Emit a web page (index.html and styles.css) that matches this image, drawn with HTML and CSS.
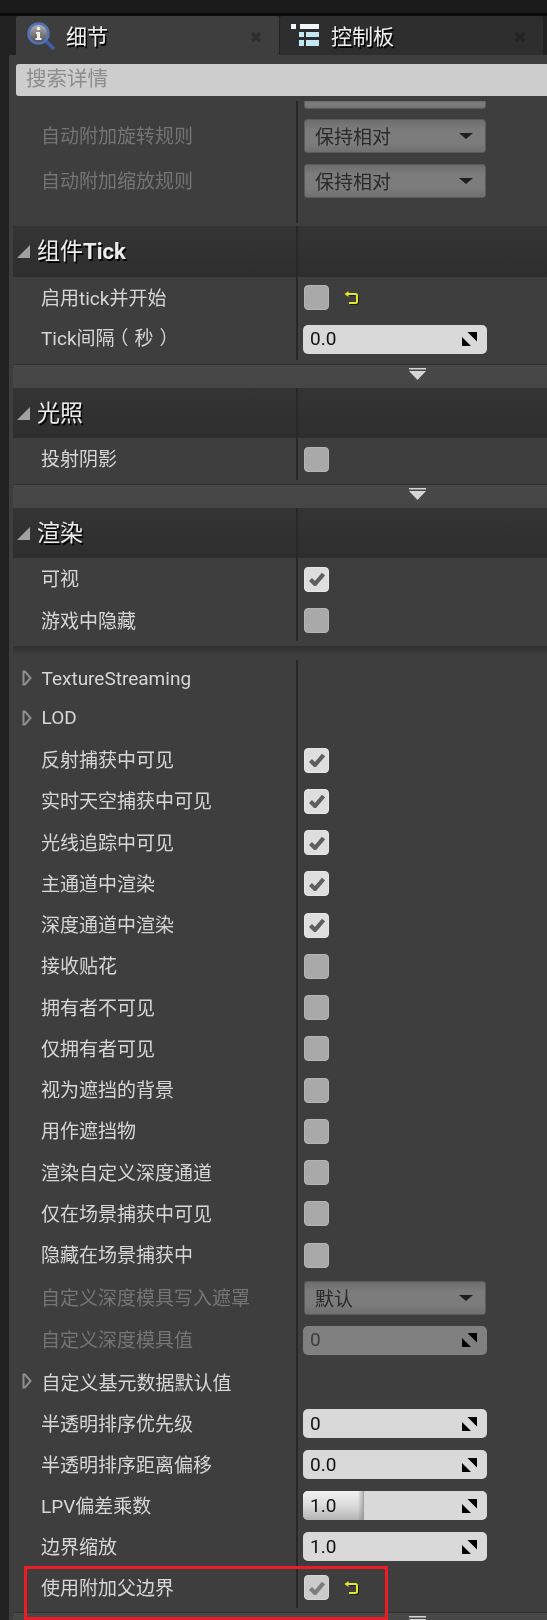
FILE: index.html
```html
<!DOCTYPE html>
<html lang="zh">
<head>
<meta charset="utf-8">
<title>细节</title>
<link rel="stylesheet" href="styles.css">
</head>
<body>
<svg class="defs" width="0" height="0" aria-hidden="true">
  <defs>
    <symbol id="spin" viewBox="0 0 15 14"><path d="M5.5 0H15V9.5ZM0 5 9 14H0Z" fill="#000"/></symbol>
    <symbol id="undo" viewBox="0 0 15 15">
      <path d="M3 4H11.500Q13 4 13 5.500V11.500Q13 13 11.500 13H5" transform="translate(1 1)" fill="none" stroke="#1a1a1a" stroke-width="2"/>
      <path d="M3 4H11.500Q13 4 13 5.500V11.500Q13 13 11.500 13H5" fill="none" stroke="#e6e62e" stroke-width="2"/>
      <path d="M0.500 4 4.500 1V7Z" fill="#e6e62e"/>
    </symbol>
    <symbol id="check" viewBox="0 0 16 14"><path d="M1.500 7.500 6 12 14.500 2" fill="none" stroke="currentColor" stroke-width="4.200"/></symbol>
    <symbol id="down" viewBox="0 0 17 12"><path d="M0 0H17V1.500H0Z" fill="#d4d4d4"/><path d="M0 3H17L8.500 12Z" fill="#d4d4d4"/></symbol>
    <symbol id="tri" viewBox="0 0 13 13"><path d="M13 0V13H0Z" fill="#a0a0a0"/></symbol>
    <symbol id="tree" viewBox="0 0 10 16"><path d="M1.500 1.500H3L8.500 8 3 14.500H1.500Z" fill="none" stroke="#8e8e8e" stroke-width="2"/></symbol>
    <symbol id="close" viewBox="0 0 12 12"><path d="M2 2 10 10M10 2 2 10" stroke="currentColor" stroke-width="3.500"/></symbol>
  </defs>
</svg>
<div class="app">
  <div class="topbar"></div>
  <div class="tabs">
    <div class="tab tab-on">
      <svg class="tab-icon" width="28" height="28" viewBox="0 0 28 28">
        <defs><linearGradient id="lens" x1="0" y1="0" x2="0" y2="1"><stop offset="0" stop-color="#b5b5b5"/><stop offset="1" stop-color="#4b4b4b"/></linearGradient></defs>
        <path d="M18 18 26 26" stroke="#3f5fa8" stroke-width="3.500" stroke-linecap="round"/>
        <circle cx="11.500" cy="11.500" r="10" fill="url(#lens)" stroke="#5271b8" stroke-width="2.500"/>
        <circle cx="11.500" cy="6.500" r="1.800" fill="#eee"/>
        <path d="M9 10H13V16H14.500V18H8.500V16H10V12H9Z" fill="#eee"/>
      </svg>
      <span class="tab-text">细节</span>
      <svg class="tab-close" width="12" height="12"><use href="#close"/></svg>
    </div>
    <div class="tab tab-off">
      <svg class="tab-icon" width="28" height="23" viewBox="0 0 28 23">
        <path d="M0 0H5V5H0ZM9 0H28V5H9Z" fill="#f0f8fb"/>
        <path d="M8 8H13V13H8ZM15 8H28V13H15ZM8 16H13V22H8ZM15 16H28V22H15Z" fill="#c3e7f5"/>
      </svg>
      <span class="tab-text">控制板</span>
      <svg class="tab-close" width="12" height="12"><use href="#close"/></svg>
    </div>
  </div>
  <div class="panel">
    <div class="search">搜索详情</div>

    <div class="group-top">
      <div class="row h-partial"><div class="name"></div><div class="val val-top"><div class="drop drop-cut"></div></div></div>
      <div class="row h-45"><div class="name dim">自动附加旋转规则</div><div class="val"><div class="drop"><span>保持相对</span><i class="caret"></i></div></div></div>
      <div class="row h-45"><div class="name dim">自动附加缩放规则</div><div class="val"><div class="drop"><span>保持相对</span><i class="caret"></i></div></div></div>
      <div class="row h-tail"><div class="name"></div><div class="val"></div></div>
    </div>

    <div class="head head-tick"><div class="head-name"><svg class="tri" width="13" height="13"><use href="#tri"/></svg><span>组件<b>Tick</b></span></div><div class="head-val"></div></div>
    <div class="row h-41"><div class="name">启用tick并开始</div><div class="val"><div class="box"></div><svg class="undo" width="15" height="15"><use href="#undo"/></svg></div></div>
    <div class="row h-42 pad-b"><div class="name">Tick间隔<span class="parens">（秒）</span></div><div class="val"><div class="field"><span>0.0</span><svg class="spin" width="15" height="14"><use href="#spin"/></svg></div></div></div>
    <div class="expander"><svg width="17" height="12"><use href="#down"/></svg></div>

    <div class="head"><div class="head-name"><svg class="tri" width="13" height="13"><use href="#tri"/></svg><span>光照</span></div><div class="head-val"></div></div>
    <div class="row h-42"><div class="name">投射阴影</div><div class="val"><div class="box"></div></div></div>
    <div class="expander"><svg width="17" height="12"><use href="#down"/></svg></div>

    <div class="head"><div class="head-name"><svg class="tri" width="13" height="13"><use href="#tri"/></svg><span>渲染</span></div><div class="head-val"></div></div>
    <div class="row h-42"><div class="name">可视</div><div class="val"><div class="box on"><svg width="16" height="14"><use href="#check"/></svg></div></div></div>
    <div class="row h-41"><div class="name">游戏中隐藏</div><div class="val"><div class="box"></div></div></div>
    <div class="shadow"></div>

    <div class="row h-ts"><div class="name tree"><svg width="10" height="16"><use href="#tree"/></svg>TextureStreaming</div><div class="val"></div></div>
    <div class="row h-lod"><div class="name tree"><svg width="10" height="16"><use href="#tree"/></svg>LOD</div><div class="val"></div></div>
    <div class="row h-list"><div class="name">反射捕获中可见</div><div class="val"><div class="box on"><svg width="16" height="14"><use href="#check"/></svg></div></div></div>
    <div class="row h-list"><div class="name">实时天空捕获中可见</div><div class="val"><div class="box on"><svg width="16" height="14"><use href="#check"/></svg></div></div></div>
    <div class="row h-list"><div class="name">光线追踪中可见</div><div class="val"><div class="box on"><svg width="16" height="14"><use href="#check"/></svg></div></div></div>
    <div class="row h-list"><div class="name">主通道中渲染</div><div class="val"><div class="box on"><svg width="16" height="14"><use href="#check"/></svg></div></div></div>
    <div class="row h-list"><div class="name">深度通道中渲染</div><div class="val"><div class="box on"><svg width="16" height="14"><use href="#check"/></svg></div></div></div>
    <div class="row h-list"><div class="name">接收贴花</div><div class="val"><div class="box"></div></div></div>
    <div class="row h-list"><div class="name">拥有者不可见</div><div class="val"><div class="box"></div></div></div>
    <div class="row h-list"><div class="name">仅拥有者可见</div><div class="val"><div class="box"></div></div></div>
    <div class="row h-list"><div class="name">视为遮挡的背景</div><div class="val"><div class="box"></div></div></div>
    <div class="row h-list"><div class="name">用作遮挡物</div><div class="val"><div class="box"></div></div></div>
    <div class="row h-list"><div class="name">渲染自定义深度通道</div><div class="val"><div class="box"></div></div></div>
    <div class="row h-list"><div class="name">仅在场景捕获中可见</div><div class="val"><div class="box"></div></div></div>
    <div class="row h-list"><div class="name">隐藏在场景捕获中</div><div class="val"><div class="box"></div></div></div>
    <div class="row h-stencil"><div class="name dim">自定义深度模具写入遮罩</div><div class="val"><div class="drop"><span>默认</span><i class="caret"></i></div></div></div>
    <div class="row h-40"><div class="name dim">自定义深度模具值</div><div class="val"><div class="field field-off"><span>0</span><svg class="spin" width="15" height="14"><use href="#spin"/></svg></div></div></div>
    <div class="row h-prim"><div class="name tree"><svg width="10" height="16"><use href="#tree"/></svg>自定义基元数据默认值</div><div class="val"></div></div>
    <div class="row h-41"><div class="name">半透明排序优先级</div><div class="val"><div class="field"><span>0</span><svg class="spin" width="15" height="14"><use href="#spin"/></svg></div></div></div>
    <div class="row h-41"><div class="name">半透明排序距离偏移</div><div class="val"><div class="field"><span>0.0</span><svg class="spin" width="15" height="14"><use href="#spin"/></svg></div></div></div>
    <div class="row h-41"><div class="name">LPV偏差乘数</div><div class="val"><div class="field"><div class="slider"></div><span>1.0</span><svg class="spin" width="15" height="14"><use href="#spin"/></svg></div></div></div>
    <div class="row h-41"><div class="name">边界缩放</div><div class="val"><div class="field"><span>1.0</span><svg class="spin" width="15" height="14"><use href="#spin"/></svg></div></div></div>
    <div class="row h-41"><div class="name">使用附加父边界</div><div class="val"><div class="box on faded"><svg width="16" height="14"><use href="#check"/></svg></div><svg class="undo" width="15" height="15"><use href="#undo"/></svg></div></div>
    <div class="expander"><svg width="17" height="12"><use href="#down"/></svg></div>
  </div>
  <div class="mark"></div>
</div>
</body>
</html>
```
FILE: styles.css
```css
* { box-sizing: border-box; }
html, body { margin: 0; padding: 0; background: #222; }
body { width: 547px; height: 1620px; overflow: hidden; font-family: Roboto, "Noto Sans CJK SC", sans-serif; font-size: 19px; color: #d6d6d6; }
.defs { position: absolute; }
.app { position: relative; height: 1620px; overflow: hidden; filter: blur(.3px); }

.topbar { height: 16px; background: #1b1b1b; border-bottom: 3px solid #0b0b0b; }
.tabs { display: flex; height: 39px; padding-left: 16px; gap: 1px; }
.tab { display: flex; align-items: center; width: 263px; border-radius: 2px 2px 0 0; }
.tab-on { background: #3e3e3e; padding-left: 11px; }
.tab-off { background: #2e2e2e; padding-left: 11px; }
.tab-text { padding-bottom: 2px; font-size: 21px; color: #f0f0f0; text-shadow: 1.500px 1.500px 0 #000; }
.tab-on .tab-text { margin-left: 11px; }
.tab-off .tab-text { margin-left: 12px; }
.tab-close { margin-left: auto; margin-right: 17px; margin-top: 2px; }
.tab-on .tab-close { color: #303030; }
.tab-off .tab-close { color: #242424; }

.panel { margin-left: 9px; height: 1565px; background: #3e3e3e; overflow: hidden; }
.search { height: 32px; margin: 9px 0 5px 7px; padding-left: 10px; background: #cdcdcd; border-radius: 3px 0 0 3px; font-size: 20.500px; line-height: 30px; color: #8c8c8c; }

.row { display: flex; }
.name { display: flex; align-items: center; width: 287px; padding-left: 32px; padding-bottom: 3px; white-space: nowrap; }
.dim { color: #757575; }
.val { display: flex; flex: 1; align-items: center; padding-left: 6px; border-left: 2px solid #282828; }
.val-top { align-items: flex-start; }
.tree { padding-left: 12.500px; padding-bottom: 0; }
.parens { margin-left: -5px; letter-spacing: 6px; }
.tree svg { margin-right: 10px; }
.tree { padding-bottom: 1px; }

.h-partial { height: 12.500px; }
.h-45 { height: 45px; }
.h-tail { height: 19.500px; }
.h-41 { height: 41px; }
.h-42 { height: 42px; }
.h-40 { height: 40px; }
.h-ts { height: 37px; }
.h-lod { height: 42.500px; }
.h-list { height: 41.250px; }
.h-stencil { height: 44.500px; }
.h-prim { height: 42.750px; }
.pad-b { padding-bottom: 2px; }
.pad-b .val { margin-bottom: -2px; }

.group-top { margin-bottom: 3px; }

.head { display: flex; height: 50px; margin-left: 4px; background: linear-gradient(#343434, #2e2e2e); }
.head-tick { height: 51px; }
.head-name { display: flex; align-items: center; width: 283px; padding-left: 4px; font-size: 23px; color: #ececec; text-shadow: 1.500px 1.500px 0 #000; white-space: nowrap; }
.head-name span { margin-top: -5px; }
.head-name b { font-size: 22px; }
.head-val { flex: 1; border-left: 2px solid #282828; }
.tri { margin-right: 7px; }

.expander { display: flex; justify-content: flex-end; height: 28px; margin-left: 4px; padding-top: 8px; padding-right: 121px; background: linear-gradient(#3e3e3e 0, #3e3e3e 4px, #333 4px, #333 5px, #484848 5px, #464646 100%); border-radius: 0 0 0 3px; }
.expander svg { display: block; }

.shadow { height: 19px; margin-left: 4px; background: linear-gradient(#3e3e3e 0, #3e3e3e 5px, #2f2f2f 5px, #333 7px, #3e3e3e 14px); }

.box { display: flex; align-items: center; justify-content: center; width: 25px; height: 25px; background: #a9a9a9; border: 1px solid #b4b4b4; border-radius: 4px; }
.box.on { background: #dedede; border-color: #e6e6e6; color: #5e5e5e; }
.box.faded { background: #cbcbcb; border-color: #d6d6d6; color: #7c7c7c; }
.undo { margin-left: 15px; }

.drop { display: flex; align-items: center; justify-content: space-between; width: 182px; height: 34px; padding: 0 12px 2px 10px; background: linear-gradient(#6d6d6d, #7c7c7c 30%, #7c7c7c 70%, #707070); border: 1px solid #5b5b5b; border-radius: 3px; color: #2a2a2a; }
.drop-cut { height: 8px; padding: 0; border-top: 0; border-radius: 0 0 3px 3px; }
.caret { width: 0; height: 0; margin-top: 2px; border-left: 7px solid transparent; border-right: 7px solid transparent; border-top: 6px solid #1e1e1e; }

.field { position: relative; display: flex; align-items: center; justify-content: space-between; width: 184px; height: 29px; margin-left: -1px; padding: 0 10px 0 7px; background: #d9d9d9; border-radius: 5px; color: #111; overflow: hidden; }
.field span { position: relative; margin-top: -1px; }
.field .spin { position: relative; }
.field-off { background: #808080; color: #3c3c3c; padding-left: 7px; }
.slider { position: absolute; left: 0; top: 0; bottom: 0; width: 61px; background: linear-gradient(90deg, rgba(255,255,255,0) 90%, rgba(130,130,130,.5) 98%, #9a9a9a 100%), linear-gradient(#f2f2f2, #dcdcdc 50%, #b4b4b4); }

.mark { position: absolute; left: 24px; top: 1566px; width: 364px; height: 54px; border: 3px solid #ed1c24; }
```
